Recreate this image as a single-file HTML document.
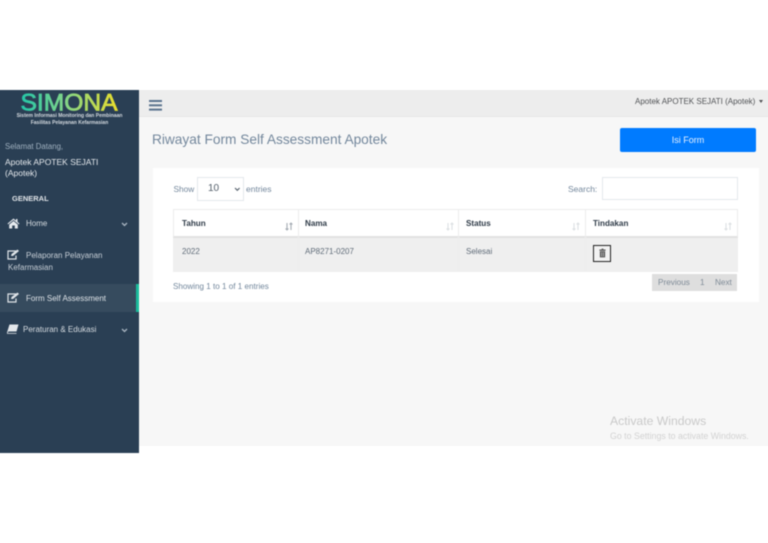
<!DOCTYPE html>
<html>
<head>
<meta charset="utf-8">
<style>
html,body{margin:0;padding:0;background:#fff}
body{width:768px;height:543px;overflow:hidden;position:relative;font-family:"Liberation Sans",sans-serif}
#wrap{position:absolute;left:0;top:0;width:768px;height:543px;filter:blur(.45px)}
.a{position:absolute;white-space:nowrap}
.th{font-weight:bold;color:#2f3b48;font-size:8.1px}
.td{color:#5f6b78;font-size:8px}
svg{position:absolute;overflow:visible}
</style>
</head>
<body>
<div id="wrap">
<!-- backgrounds -->
<div class="a" style="left:-6px;top:90px;width:145px;height:363px;background:#2a3f54"></div>
<div class="a" style="left:139px;top:90px;width:635px;height:356px;background:#f7f7f7"></div>
<div class="a" style="left:139px;top:90px;width:635px;height:27px;background:#ededed;border-bottom:1px solid #e6e6e6;box-sizing:border-box"></div>

<!-- logo -->
<svg width="0" height="0" style="position:absolute"><defs><linearGradient id="g" gradientUnits="userSpaceOnUse" x1="20" x2="118" y1="0" y2="0"><stop offset="0" stop-color="#22c7a9"/><stop offset=".45" stop-color="#7fd58a"/><stop offset="1" stop-color="#ecdf2c"/></linearGradient></defs></svg>
<svg style="left:0;top:90px" width="139" height="24"><text x="69" y="20.500" text-anchor="middle" font-family="Liberation Sans" font-size="24" textLength="97" lengthAdjust="spacingAndGlyphs" fill="url(#g)" stroke="url(#g)" stroke-width=".8">SIMONA</text></svg>
<div class="a" style="left:0;width:139px;text-align:center;top:112.500px;font-size:5px;line-height:7px;font-weight:bold;color:#d5dbe0">Sistem Informasi Monitoring dan Pembinaan<br>Fasilitas Pelayanan Kefarmasian</div>

<div class="a" style="left:5px;top:142px;font-size:7.800px;color:#9fb0bf">Selamat Datang,</div>
<div class="a" style="left:5px;top:156.500px;font-size:8.500px;line-height:11px;color:#e4e8ec">Apotek APOTEK SEJATI<br>(Apotek)</div>
<div class="a" style="left:12px;top:194px;font-size:7.500px;font-weight:bold;color:#e0e4e8">GENERAL</div>

<!-- menu -->
<svg style="left:7px;top:218px" width="13" height="11" viewBox="0 0 13 11"><path d="M6.500 0.500L0.500 5.600l.7.8L6.500 2l5.300 4.400.7-.8-2-1.700V1H9v1.600zM2.200 6.600V10.500h3V7.500h2.600v3h3V6.600L6.500 3z" fill="#e6eaee"/></svg>
<div class="a" style="left:26px;top:218.500px;font-size:8px;color:#d5dbe0">Home</div>
<svg style="left:121px;top:222px" width="7" height="5"><path d="M1 1l2.500 2.500L6 1" fill="none" stroke="#a9b6c2" stroke-width="1.300"/></svg>

<svg style="left:7px;top:249px" width="13" height="11" viewBox="0 0 13 11"><path d="M9 2H1v8h8V6.500" fill="none" stroke="#dfe4e8" stroke-width="1.200"/><path d="M4 7l.5-2L10.500.5l1.500 1.500L6 7z" fill="#dfe4e8"/></svg>
<div class="a" style="left:26px;top:250.500px;font-size:8px;color:#c6ced6">Pelaporan Pelayanan</div>
<div class="a" style="left:8px;top:262.500px;font-size:8px;color:#c6ced6">Kefarmasian</div>

<div class="a" style="left:-6px;top:284px;width:142px;height:28px;background:#364b5e"></div>
<div class="a" style="left:136px;top:284px;width:3px;height:28px;background:#1abb9c"></div>
<svg style="left:7px;top:292px" width="13" height="11" viewBox="0 0 13 11"><path d="M9 2H1v8h8V6.500" fill="none" stroke="#dfe4e8" stroke-width="1.200"/><path d="M4 7l.5-2L10.500.5l1.500 1.500L6 7z" fill="#dfe4e8"/></svg>
<div class="a" style="left:26px;top:293.500px;font-size:8px;color:#dde2e7">Form Self Assessment</div>

<svg style="left:7px;top:324px" width="12" height="10" viewBox="0 0 12 10"><path d="M2.500 0.500H11.500L9.500 7.500H1.500L.5 9h9v.8H0V8.500z" fill="#e3e7eb"/></svg>
<div class="a" style="left:23px;top:325px;font-size:8px;color:#d5dbe0">Peraturan &amp; Edukasi</div>
<svg style="left:121px;top:328px" width="7" height="5"><path d="M1 1l2.500 2.500L6 1" fill="none" stroke="#a9b6c2" stroke-width="1.300"/></svg>

<!-- top nav -->
<div class="a" style="left:149px;top:100px;width:13px;height:2.400px;background:#5a738e;box-shadow:0 4.300px 0 #5a738e,0 8.600px 0 #5a738e"></div>
<div class="a" style="left:635px;top:97px;font-size:8px;color:#515356">Apotek APOTEK SEJATI (Apotek)</div>
<div class="a" style="left:759px;top:100px;width:0;height:0;border:2.500px solid transparent;border-top:3px solid #515356"></div>

<!-- title -->
<div class="a" style="left:152px;top:131.500px;font-size:13.700px;color:#73879c">Riwayat Form Self Assessment Apotek</div>
<div class="a" style="left:620px;top:128px;width:136px;height:24px;background:#007bff;border-radius:2px;color:#e8f2ff;font-size:9px;line-height:24px;text-align:center">Isi Form</div>

<!-- panel -->
<div class="a" style="left:153px;top:168px;width:606px;height:134px;background:#fff"></div>
<div class="a" style="left:173.500px;top:184px;font-size:8.300px;color:#73879c">Show</div>
<div class="a" style="left:197px;top:177px;width:47px;height:24px;box-sizing:border-box;border:1px solid #e4e8ec;background:#fff"></div>
<div class="a" style="left:208px;top:183px;font-size:10px;color:#55606c">10</div>
<svg style="left:234px;top:187px" width="7" height="5"><path d="M1 1l2.300 2.300L5.600 1" fill="none" stroke="#55606c" stroke-width="1.100"/></svg>
<div class="a" style="left:246px;top:184px;font-size:8.500px;color:#73879c">entries</div>
<div class="a" style="left:568px;top:184px;font-size:8.500px;color:#73879c">Search:</div>
<div class="a" style="left:602px;top:177px;width:136px;height:23px;box-sizing:border-box;border:1px solid #e4e8ec;background:#fff"></div>

<!-- table -->
<div class="a" style="left:173px;top:209px;width:565px;height:29px;box-sizing:border-box;border:1px solid #ececec;border-bottom:2px solid #e2e2e2;background:#fff"></div>
<div class="a" style="left:173px;top:238px;width:565px;height:34px;background:#efefef"></div>
<div class="a" style="left:298px;top:209px;width:1px;height:63px;background:#ededed"></div>
<div class="a" style="left:458px;top:209px;width:1px;height:63px;background:#ededed"></div>
<div class="a" style="left:585px;top:209px;width:1px;height:63px;background:#ededed"></div>

<div class="a th" style="left:182px;top:218.500px">Tahun</div>
<div class="a th" style="left:305px;top:218.500px">Nama</div>
<div class="a th" style="left:466px;top:218.500px">Status</div>
<div class="a th" style="left:593px;top:218.500px">Tindakan</div>
<svg style="left:285px;top:222px" width="8" height="9"><path d="M2 1v7M.6 6.500L2 8l1.400-1.500M6 8V1M4.600 2.500L6 1l1.400 1.500" fill="none" stroke="#a5acb3" stroke-width="1.100"/></svg>
<svg style="left:446px;top:222px" width="8" height="9"><path d="M2 1v7M.6 6.500L2 8l1.400-1.500M6 8V1M4.600 2.500L6 1l1.400 1.500" fill="none" stroke="#dde0e3" stroke-width="1.100"/></svg>
<svg style="left:572px;top:222px" width="8" height="9"><path d="M2 1v7M.6 6.500L2 8l1.400-1.500M6 8V1M4.600 2.500L6 1l1.400 1.500" fill="none" stroke="#dde0e3" stroke-width="1.100"/></svg>
<svg style="left:724px;top:222px" width="8" height="9"><path d="M2 1v7M.6 6.500L2 8l1.400-1.500M6 8V1M4.600 2.500L6 1l1.400 1.500" fill="none" stroke="#dde0e3" stroke-width="1.100"/></svg>

<div class="a td" style="left:182px;top:246.500px">2022</div>
<div class="a td" style="left:305px;top:246.500px">AP8271-0207</div>
<div class="a td" style="left:466px;top:246.500px">Selesai</div>
<div class="a" style="left:593px;top:245px;width:18px;height:17px;box-sizing:border-box;border:1.300px solid #222;background:#f2f2f2"></div>
<svg style="left:599px;top:248px" width="7" height="10" viewBox="0 0 8 11"><path d="M3 .5h2v1h2.500v1.400H.5V1.500H3zM1 3.500h6v7H1z" fill="#555"/><path d="M3 4.500v5M5 4.500v5" stroke="#ddd" stroke-width=".7"/></svg>

<div class="a" style="left:173px;top:282px;font-size:8.100px;color:#73879c">Showing 1 to 1 of 1 entries</div>
<div class="a" style="left:652px;top:274px;width:85px;height:17px;background:#dedede"></div>
<div class="a" style="left:658px;top:278px;font-size:8.200px;color:#7f8b97">Previous</div>
<div class="a" style="left:700px;top:278px;font-size:8.200px;color:#7f8b97">1</div>
<div class="a" style="left:715px;top:278px;font-size:8.200px;color:#7f8b97">Next</div>

<!-- watermark -->
<div class="a" style="left:610px;top:414px;font-size:12.200px;color:#c9c9c9">Activate Windows</div>
<div class="a" style="left:610px;top:431px;font-size:8.800px;color:#d2d2d2">Go to Settings to activate Windows.</div>
</div>
</body>
</html>
